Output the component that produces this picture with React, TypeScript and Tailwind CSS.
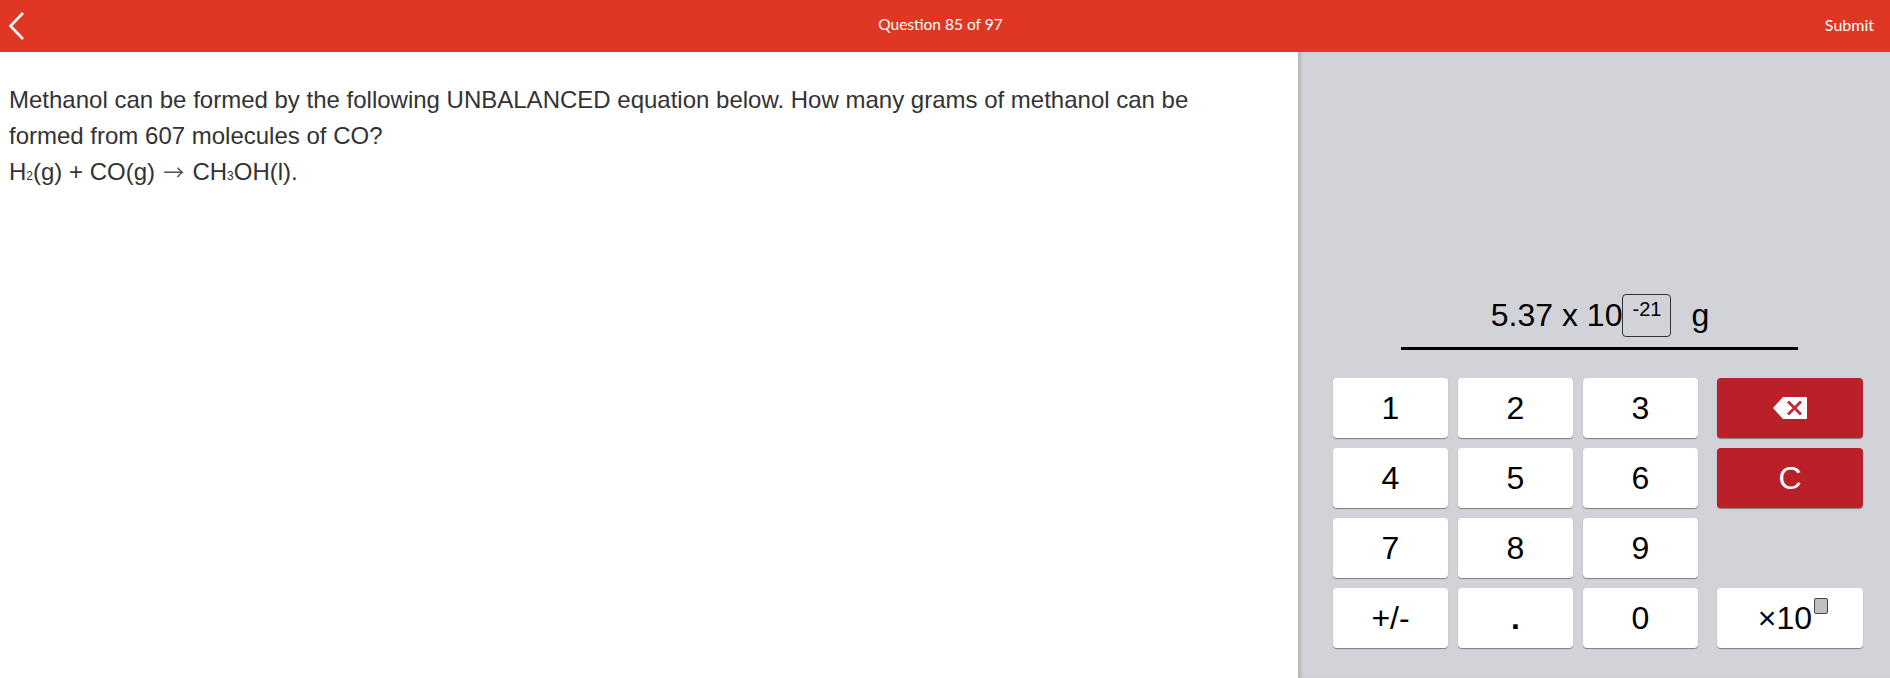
const KEYS = [
  ["1", "2", "3"],
  ["4", "5", "6"],
  ["7", "8", "9"],
  ["+/-", ".", "0"],
];

function NumKey({ label }: { label: string }) {
  return (
    <button
      className={
        label === "."
          ? "flex h-[60px] w-[115px] items-center justify-center rounded-[4px] bg-white text-[32px] font-bold text-black shadow-[0_1px_1px_rgba(0,0,0,0.4)]"
          : "flex h-[60px] w-[115px] items-center justify-center rounded-[4px] bg-white text-[32px] text-black shadow-[0_1px_1px_rgba(0,0,0,0.4)]"
      }
    >
      {label}
    </button>
  );
}

function SideKey({ children, red }: { children?: React.ReactNode; red?: boolean }) {
  if (!children) return <div className="ml-[9px] h-[60px] w-[146px]" />;
  return (
    <button
      className={
        red
          ? "ml-[9px] flex h-[60px] w-[146px] items-center justify-center rounded-[4px] bg-[#b92028] text-[32px] text-white shadow-[0_1px_1px_rgba(0,0,0,0.4)]"
          : "ml-[9px] flex h-[60px] w-[146px] items-center justify-center rounded-[4px] bg-white text-[32px] text-black shadow-[0_1px_1px_rgba(0,0,0,0.4)]"
      }
    >
      {children}
    </button>
  );
}

function BackspaceIcon() {
  return (
    <svg width="36" height="24" viewBox="0 0 36 24">
      <path d="M11 1h23a1 1 0 0 1 1 1v20a1 1 0 0 1-1 1H11L1 12z" fill="#fff" />
      <path d="M16 5.500l13 13M29 5.500l-13 13" stroke="#c22a35" strokeWidth="2.800" fill="none" />
    </svg>
  );
}

export default function App() {
  return (
    <div className="flex h-[678px] flex-col font-['Liberation_Sans',Arial,sans-serif]">
      <header className="flex h-[52px] shrink-0 items-center justify-between bg-[#df3723] pr-[16px] pl-[8px] font-['Lato',sans-serif] text-[16px] text-white">
        <svg width="18" height="30" viewBox="0 0 18 30" fill="none" stroke="#fff" strokeWidth="2.600">
          <path d="M15 2 L2.500 15 L15 28" />
        </svg>
        <span className="mt-[-2px] ml-[30px] text-[15.500px]">Question 85 of 97</span>
        <span className="mt-[-2px]">Submit</span>
      </header>

      <div className="flex min-h-0 flex-1">
        <main className="flex-1 bg-white px-[9px] pt-[30px] text-[24px] leading-[36px] text-[#333]">
          <p className="w-[1230px]">
            Methanol can be formed by the following UNBALANCED equation below. How many grams of methanol can be formed
            from 607 molecules of CO?
          </p>
          <p>
            H<sub className="bottom-0 text-[12px]">2</sub>(g) + CO(g){" "}
            <span className="mx-[1.500px] font-['Noto_Sans_CJK_SC',sans-serif] text-[21px] leading-none text-[#555]">→</span>{" "}
            CH<sub className="bottom-0 text-[12px]">3</sub>OH(l).
          </p>
        </main>

        <aside className="flex w-[592px] shrink-0 flex-col items-center justify-end bg-[#d1d3d8] pb-[30px] pl-[8px] shadow-[inset_5px_0_4px_-3px_rgba(0,0,0,0.18)]">
          <div className="mb-[28px] ml-[2px] flex h-[56px] w-[397px] items-start justify-center border-b-[3px] border-black pl-[2px] text-[32px] text-black">
            <span className="mt-[-3px]">5.37 x 10</span>
            <span className="flex h-[43px] w-[49px] justify-center rounded-[4px] border border-[#333] text-[20px] leading-[28px]">
              -21
            </span>
            <span className="mt-[-3px] ml-[20px]">g</span>
          </div>

          <div className="flex flex-col gap-[10px]">
            {KEYS.map((row, i) => (
              <div key={i} className="flex gap-[10px]">
                {row.map((k) => (
                  <NumKey key={k} label={k} />
                ))}
                {i === 0 && (
                  <SideKey red>
                    <BackspaceIcon />
                  </SideKey>
                )}
                {i === 1 && <SideKey red>C</SideKey>}
                {i === 2 && <SideKey />}
                {i === 3 && (
                  <SideKey>
                    <span className="relative mr-[10px]">
                      ×10
                      <span className="absolute top-[4px] right-[-16px] h-[16px] w-[14px] rounded-[2px] border border-[#444] bg-[#c0c0c0]" />
                    </span>
                  </SideKey>
                )}
              </div>
            ))}
          </div>
        </aside>
      </div>
    </div>
  );
}
